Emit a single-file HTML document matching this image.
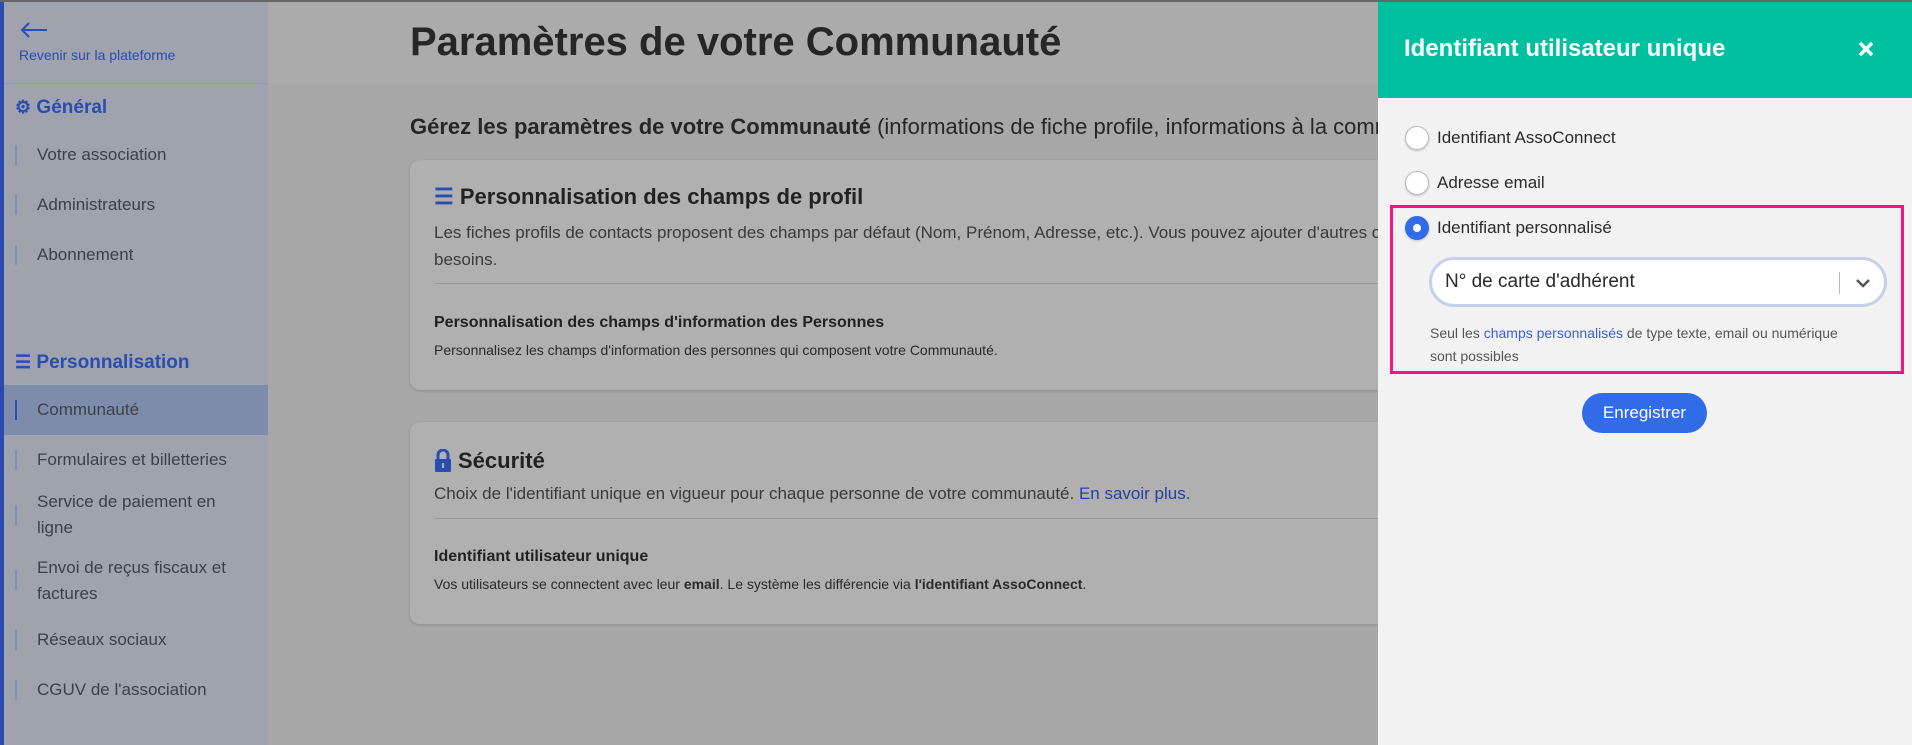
<!DOCTYPE html>
<html><head><meta charset="utf-8"><style>
*{box-sizing:border-box;margin:0;padding:0}
body{width:1912px;height:745px;overflow:hidden;font-family:"Liberation Sans",sans-serif;background:#a7a7a7;position:relative}
.abs{position:absolute;white-space:nowrap}
#side{position:absolute;left:0;top:0;width:268px;height:745px;background:#9ea3ae;border-left:4px solid #2a4ab0}
#topbar{position:absolute;left:268px;top:0;width:1110px;height:84px;background:#ababab}
.card{position:absolute;left:410px;width:1000px;background:#b0b0b0;border-radius:10px;box-shadow:0 1px 3px rgba(0,0,0,.15)}
.si{position:absolute;left:33px;font-size:17px;color:#3e4048;line-height:26px}
.mk{position:absolute;left:11px;width:2px;height:20px;background:#8590b0}
.sh{position:absolute;left:11px;font-size:19px;font-weight:bold;color:#2a4db0}
#panel{position:absolute;left:1378px;top:0;width:534px;height:745px;background:#f2f2f2}
.radio{position:absolute;left:1405px;width:24px;height:24px;border-radius:50%;background:#fff;border:1px solid #bbb;box-shadow:0 1px 2px rgba(0,0,0,.2)}
.rl{position:absolute;left:1437px;font-size:17px;color:#2a2a2a}
</style></head><body>
<div style="position:absolute;left:0;top:0;width:1912px;height:2px;background:#666;z-index:5"></div>
<div id="side">
  <svg class="abs" style="left:15px;top:22px" width="30" height="16" viewBox="0 0 30 16"><path d="M28 8H3M10 1L3 8l7 7" stroke="#2a4db0" stroke-width="2" fill="none"/></svg>
  <div class="abs" style="left:15px;top:47px;font-size:14px;color:#2a4db0">Revenir sur la plateforme</div>
  <div style="position:absolute;left:0;top:83px;width:264px;height:1px;background:#8a9ac0"></div>
  <div class="sh" style="top:97px"><span style="font-size:18px">⚙</span> Général</div>
  <div class="mk" style="top:145px"></div><div class="si" style="top:142px">Votre association</div>
  <div class="mk" style="top:195px"></div><div class="si" style="top:192px">Administrateurs</div>
  <div class="mk" style="top:245px"></div><div class="si" style="top:242px">Abonnement</div>
  <div class="sh" style="top:352px"><span style="font-size:18px">☰</span> Personnalisation</div>
  <div style="position:absolute;left:0;top:385px;width:264px;height:50px;background:#7d8cab"></div>
  <div class="mk" style="top:400px;background:#2a4db0"></div><div class="si" style="top:397px">Communauté</div>
  <div class="mk" style="top:450px"></div><div class="si" style="top:447px">Formulaires et billetteries</div>
  <div class="mk" style="top:505px"></div><div class="si" style="top:489px">Service de paiement en<br>ligne</div>
  <div class="mk" style="top:570px"></div><div class="si" style="top:555px">Envoi de reçus fiscaux et<br>factures</div>
  <div class="mk" style="top:630px"></div><div class="si" style="top:627px">Réseaux sociaux</div>
  <div class="mk" style="top:680px"></div><div class="si" style="top:677px">CGUV de l'association</div>
</div>
<div id="topbar"></div>
<div class="abs" style="left:410px;top:20px;font-size:40px;font-weight:bold;color:#262626">Paramètres de votre Communauté</div>
<div class="abs" style="left:410px;top:114px;font-size:22px;color:#262626"><b>Gérez les paramètres de votre Communauté</b> (informations de fiche profile, informations à la communauté)</div>
<div class="card" style="top:160px;height:230px">
  <div class="abs" style="left:24px;top:24px;font-size:22px;font-weight:bold;color:#222"><span style="color:#2a4db0">☰</span> Personnalisation des champs de profil</div>
  <div class="abs" style="left:24px;top:59px;font-size:17px;color:#3a3a3a;line-height:27px">Les fiches profils de contacts proposent des champs par défaut (Nom, Prénom, Adresse, etc.). Vous pouvez ajouter d'autres champs selon vos<br>besoins.</div>
  <div style="position:absolute;left:24px;right:0;top:123px;height:1px;background:#999"></div>
  <div class="abs" style="left:24px;top:154px;font-size:16px;font-weight:bold;color:#222">Personnalisation des champs d'information des Personnes</div>
  <div class="abs" style="left:24px;top:182px;font-size:14px;color:#2a2a2a">Personnalisez les champs d'information des personnes qui composent votre Communauté.</div>
</div>
<div class="card" style="top:422px;height:202px">
  <svg class="abs" style="left:24px;top:27px" width="18" height="23" viewBox="0 0 18 23"><path d="M4 10V6a5 5 0 0 1 10 0v4" stroke="#2a4db0" stroke-width="3" fill="none"/><rect x="1" y="10" width="16" height="13" rx="1" fill="#2a4db0"/><rect x="8" y="14" width="2" height="5" fill="#b0b0b0"/></svg>
  <div class="abs" style="left:48px;top:26px;font-size:22px;font-weight:bold;color:#222">Sécurité</div>
  <div class="abs" style="left:24px;top:62px;font-size:17px;color:#3a3a3a">Choix de l'identifiant unique en vigueur pour chaque personne de votre communauté. <span style="color:#2a3fa0">En savoir plus.</span></div>
  <div style="position:absolute;left:24px;right:0;top:96px;height:1px;background:#999"></div>
  <div class="abs" style="left:24px;top:126px;font-size:16px;font-weight:bold;color:#222">Identifiant utilisateur unique</div>
  <div class="abs" style="left:24px;top:154px;font-size:14px;color:#2a2a2a">Vos utilisateurs se connectent avec leur <b>email</b>. Le système les différencie via <b>l'identifiant AssoConnect</b>.</div>
</div>
<div id="panel">
  <div style="position:absolute;left:0;top:0;width:534px;height:98px;background:#00c0a0"></div>
  <div class="abs" style="left:26px;top:35px;font-size:24px;font-weight:bold;color:#fff">Identifiant utilisateur unique</div>
  <svg class="abs" style="left:480px;top:41px" width="16" height="16" viewBox="0 0 16 16"><path d="M2 2L14 14M14 2L2 14" stroke="#fff" stroke-width="3.5"/></svg>
</div>
<div class="radio" style="top:126px"></div><div class="rl" style="top:128px">Identifiant AssoConnect</div>
<div class="radio" style="top:171px"></div><div class="rl" style="top:173px">Adresse email</div>
<div class="radio" style="top:216px;background:#316be8;border-color:#316be8"><div style="position:absolute;left:7px;top:7px;width:8px;height:8px;border-radius:50%;background:#fff"></div></div><div class="rl" style="top:218px">Identifiant personnalisé</div>
<div style="position:absolute;left:1390px;top:205px;width:514px;height:169px;border:3px solid #ff1080"></div>
<div style="position:absolute;left:1429px;top:257px;width:458px;height:50px;border-radius:25px;background:#fff;border:3px solid #c6d0ea"></div>
<div class="abs" style="left:1445px;top:271px;font-size:19px;color:#2a2a2a">N° de carte d'adhérent</div>
<div style="position:absolute;left:1839px;top:272px;width:1px;height:22px;background:#bbb"></div>
<svg class="abs" style="left:1855px;top:278px" width="16" height="10" viewBox="0 0 16 10"><path d="M2 2l6 6 6-6" stroke="#555" stroke-width="2.5" fill="none"/></svg>
<div class="abs" style="left:1430px;top:322px;font-size:14px;color:#555;line-height:23px">Seul les <span style="color:#3a5fd9">champs personnalisés</span> de type texte, email ou numérique<br>sont possibles</div>
<div style="position:absolute;left:1582px;top:393px;width:125px;height:40px;border-radius:20px;background:#316be8;color:#fff;font-size:17px;text-align:center;line-height:40px">Enregistrer</div>
</body></html>
